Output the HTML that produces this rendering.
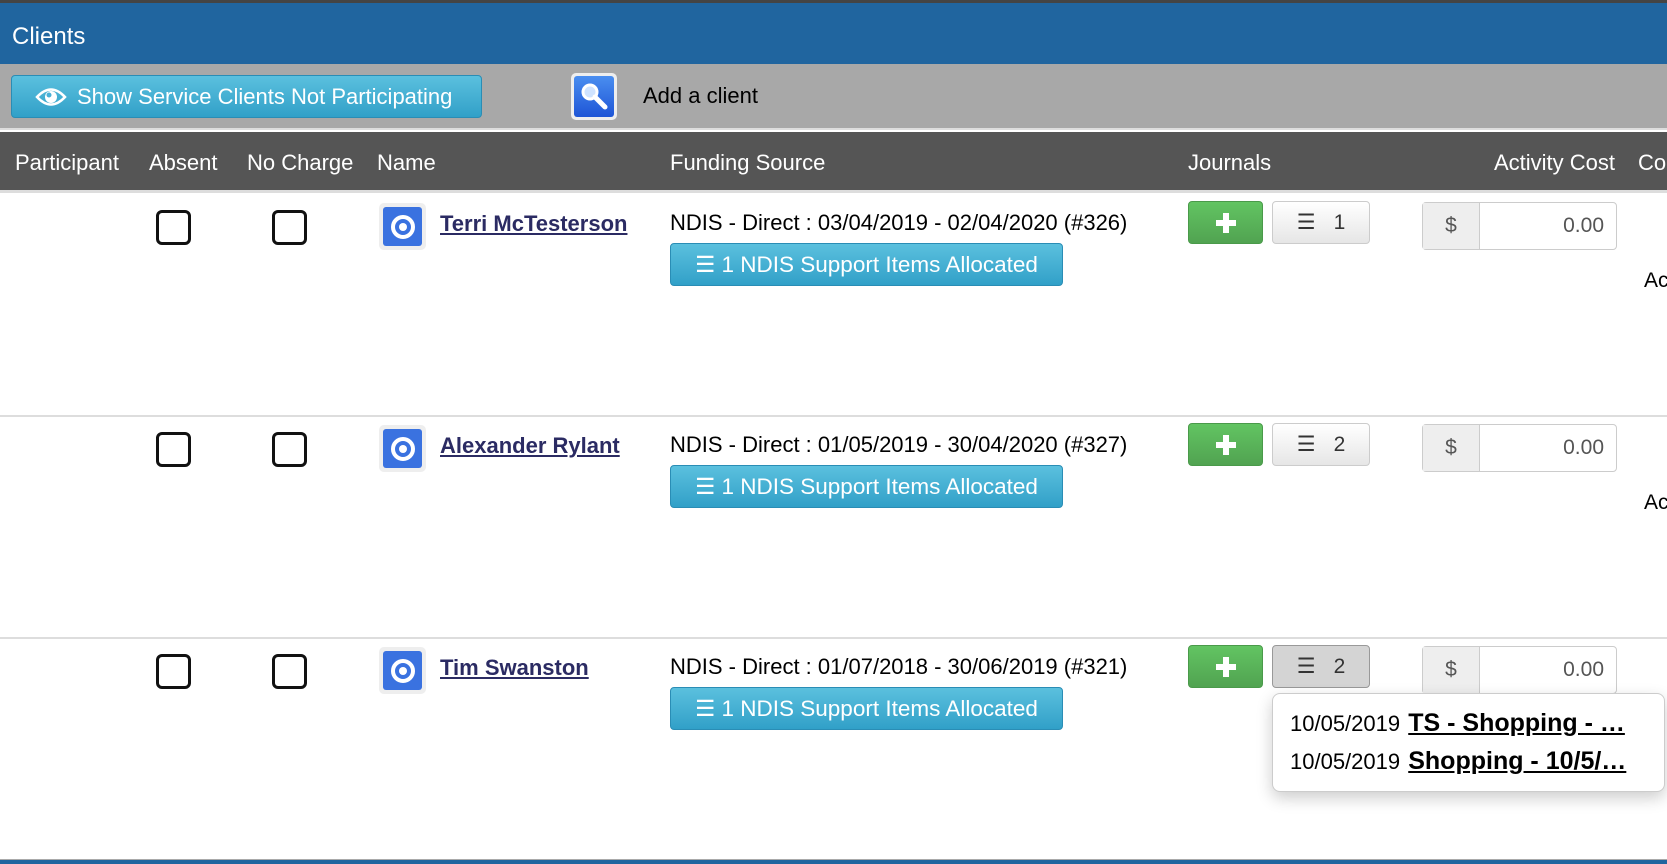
<!DOCTYPE html>
<html><head><meta charset="utf-8"><style>
*{box-sizing:border-box;margin:0;padding:0}
body{width:1667px;height:864px;overflow:hidden;background:#fff;font-family:"Liberation Sans",Arial,sans-serif;position:relative;color:#000}
.abs{position:absolute}
.top{left:0;top:0;width:1667px;height:3px;background:#444}
.blue{left:0;top:3px;width:1667px;height:61px;background:#20659f}
.gray{left:0;top:64px;width:1667px;height:66px;background:#a8a8a8;border-bottom:2px solid #ddd}
.dark{left:0;top:132px;width:1667px;height:61px;background:#555;border-bottom:3px solid #ddd}
.t{white-space:nowrap;line-height:1}
.btn{left:11px;top:75px;width:471px;height:43px;border-radius:4px;background:linear-gradient(#5bc0de,#31a0c8);border:1px solid #2a8db5;color:#fff;font-size:22px}
.cb{width:35px;height:35px;border:3px solid #111;border-radius:6px;background:#fff}
.av{width:47px;height:47px;border-radius:5px;background:#eee;padding:4px}
.av div{width:100%;height:100%;border-radius:3px;background:#3a72e0;display:flex;align-items:center;justify-content:center}
.name{color:#2b2b63;font-weight:bold;text-decoration:underline;font-size:22px}
.fs{font-size:22px}
.nd{width:393px;height:43px;border-radius:4px;background:linear-gradient(#5bc0de,#31a0c8);border:1px solid #2a8db5;color:#fff;font-size:22.5px;display:flex;align-items:center;justify-content:center;gap:6px}
.grn{width:75px;height:43px;border-radius:4px;background:linear-gradient(#62c462,#51a351);border:1px solid #4a9a4a}
.lst{width:98px;height:43px;border-radius:4px;background:linear-gradient(#fff,#e6e6e6);border:1px solid #ccc;font-size:21px;color:#333;display:flex;align-items:center;justify-content:center;gap:18px}
.inp{width:195px;height:48px;border:1px solid #ccc;border-radius:4px;background:#fff;display:flex;font-size:21px;color:#555}
.inp .a{width:57px;background:#eee;border-right:1px solid #ccc;display:flex;align-items:center;justify-content:center}
.inp .v{flex:1;text-align:right;padding-right:12px;display:flex;align-items:center;justify-content:flex-end}
.sep{left:0;width:1667px;height:2px;background:#ddd}
</style></head><body>
<div class="abs top"></div>
<div class="abs blue"></div>
<div class="abs t" style="left:12px;top:25px;font-size:24px;color:#fff">Clients</div>
<div class="abs gray"></div>
<div class="abs btn"><svg class="abs" style="left:23px;top:10px" width="32" height="22" viewBox="0 0 32 22"><path d="M2 11 Q16 -4 30 11 Q16 26 2 11Z" fill="none" stroke="#fff" stroke-width="2.5"/><circle cx="16" cy="11" r="6" fill="#fff"/><circle cx="14" cy="9" r="2.5" fill="#4ab0d6"/></svg><span class="abs t" style="left:65px;top:10px">Show Service Clients Not Participating</span></div>
<div class="abs" style="left:571px;top:73px;width:46px;height:47px;border-radius:5px;background:#eee;padding:3px"><div style="width:100%;height:100%;background:linear-gradient(#4a8ef0,#1e55d6);border-radius:3px;position:relative"><svg class="abs" style="left:5px;top:5px" width="30" height="30" viewBox="0 0 30 30"><circle cx="11" cy="11" r="7" fill="#cfe3ff" stroke="#fff" stroke-width="3"/><path d="M16 16 L26 26" stroke="#fff" stroke-width="5" stroke-linecap="round"/></svg></div></div>
<div class="abs t" style="left:643px;top:85px;font-size:22px">Add a client</div>
<div class="abs dark"></div>
<div class="abs t" style="left:15px;top:152px;font-size:22px;color:#fff">Participant</div>
<div class="abs t" style="left:149px;top:152px;font-size:22px;color:#fff">Absent</div>
<div class="abs t" style="left:247px;top:152px;font-size:22px;color:#fff">No Charge</div>
<div class="abs t" style="left:377px;top:152px;font-size:22px;color:#fff">Name</div>
<div class="abs t" style="left:670px;top:152px;font-size:22px;color:#fff">Funding Source</div>
<div class="abs t" style="left:1188px;top:152px;font-size:22px;color:#fff">Journals</div>
<div class="abs t" style="left:1494px;top:152px;font-size:22px;color:#fff">Activity Cost</div>
<div class="abs t" style="left:1638px;top:152px;font-size:22px;color:#fff">Co</div>

<div class="abs" style="left:0;top:0">
<!-- row1 -->
<div class="abs cb" style="left:156px;top:210px"></div>
<div class="abs cb" style="left:272px;top:210px"></div>
<div class="abs av" style="left:379px;top:203px"><div><svg width="28" height="28"><circle cx="14" cy="14" r="10" fill="none" stroke="#fff" stroke-width="4"/><circle cx="14" cy="14" r="4" fill="#fff"/></svg></div></div>
<div class="abs t name" style="left:440px;top:213px">Terri McTesterson</div>
<div class="abs t fs" style="left:670px;top:212px">NDIS - Direct : 03/04/2019 - 02/04/2020 (#326)</div>
<div class="abs nd" style="left:670px;top:243px">☰ 1 NDIS Support Items Allocated</div>
<div class="abs grn" style="left:1188px;top:201px"><svg class="abs" style="left:25px;top:9px" width="24" height="24"><path d="M12 2V22M2 12H22" stroke="#fff" stroke-width="6"/></svg></div>
<div class="abs lst" style="left:1272px;top:201px"><span>☰</span><span>1</span></div>
<div class="abs inp" style="left:1422px;top:202px"><div class="a">$</div><div class="v">0.00</div></div>
<div class="abs t" style="left:1644px;top:270px;font-size:21px">Ac</div>
<div class="abs sep" style="top:415px"></div>
<!-- row2 -->
<div class="abs cb" style="left:156px;top:432px"></div>
<div class="abs cb" style="left:272px;top:432px"></div>
<div class="abs av" style="left:379px;top:425px"><div><svg width="28" height="28"><circle cx="14" cy="14" r="10" fill="none" stroke="#fff" stroke-width="4"/><circle cx="14" cy="14" r="4" fill="#fff"/></svg></div></div>
<div class="abs t name" style="left:440px;top:435px">Alexander Rylant</div>
<div class="abs t fs" style="left:670px;top:434px">NDIS - Direct : 01/05/2019 - 30/04/2020 (#327)</div>
<div class="abs nd" style="left:670px;top:465px">☰ 1 NDIS Support Items Allocated</div>
<div class="abs grn" style="left:1188px;top:423px"><svg class="abs" style="left:25px;top:9px" width="24" height="24"><path d="M12 2V22M2 12H22" stroke="#fff" stroke-width="6"/></svg></div>
<div class="abs lst" style="left:1272px;top:423px"><span>☰</span><span>2</span></div>
<div class="abs inp" style="left:1422px;top:424px"><div class="a">$</div><div class="v">0.00</div></div>
<div class="abs t" style="left:1644px;top:492px;font-size:21px">Ac</div>
<div class="abs sep" style="top:637px"></div>
<!-- row3 -->
<div class="abs cb" style="left:156px;top:654px"></div>
<div class="abs cb" style="left:272px;top:654px"></div>
<div class="abs av" style="left:379px;top:647px"><div><svg width="28" height="28"><circle cx="14" cy="14" r="10" fill="none" stroke="#fff" stroke-width="4"/><circle cx="14" cy="14" r="4" fill="#fff"/></svg></div></div>
<div class="abs t name" style="left:440px;top:657px">Tim Swanston</div>
<div class="abs t fs" style="left:670px;top:656px">NDIS - Direct : 01/07/2018 - 30/06/2019 (#321)</div>
<div class="abs nd" style="left:670px;top:687px">☰ 1 NDIS Support Items Allocated</div>
<div class="abs grn" style="left:1188px;top:645px"><svg class="abs" style="left:25px;top:9px" width="24" height="24"><path d="M12 2V22M2 12H22" stroke="#fff" stroke-width="6"/></svg></div>
<div class="abs lst" style="left:1272px;top:645px;background:#d4d4d4;border-color:#999"><span>☰</span><span>2</span></div>
<div class="abs inp" style="left:1422px;top:646px"><div class="a">$</div><div class="v">0.00</div></div>
<div class="abs" style="left:1272px;top:693px;width:393px;height:99px;background:#fff;border:1px solid #ccc;border-radius:8px;box-shadow:0 6px 16px rgba(0,0,0,.2)">
<div class="abs t" style="left:17px;top:17px;font-size:22px">10/05/2019 <b style="text-decoration:underline;font-size:25px;margin-left:2px">TS - Shopping - …</b></div>
<div class="abs t" style="left:17px;top:55px;font-size:22px">10/05/2019 <b style="text-decoration:underline;font-size:25px;margin-left:2px">Shopping - 10/5/…</b></div>
</div>
<div class="abs" style="left:0;top:859px;width:1667px;height:5px;background:#20659f;border-top:1px solid #aaa"></div>
</div>
</body></html>
